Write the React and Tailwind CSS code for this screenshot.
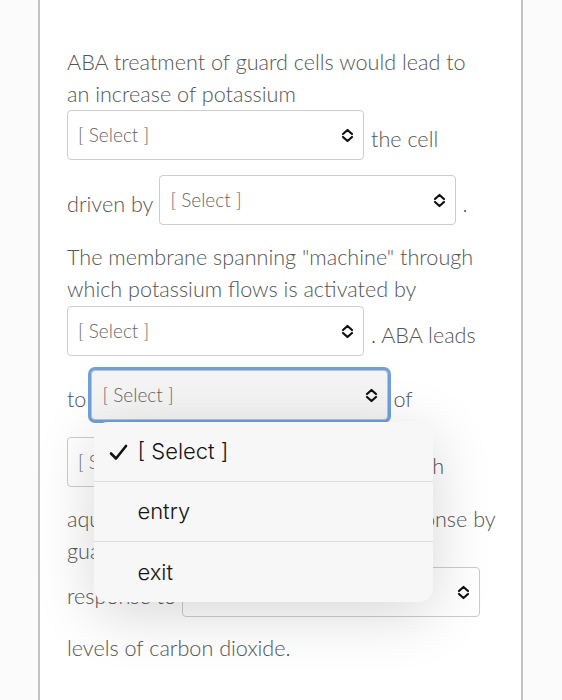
import React from 'react'

function Chevrons() {
  return (
    <svg width="13" height="15" viewBox="0 0 13 15" fill="none" stroke="#111" strokeWidth="2.2" strokeLinecap="round" strokeLinejoin="round">
      <path d="M2 6 L6.5 2 L11 6" />
      <path d="M2 9 L6.5 13 L11 9" />
    </svg>
  )
}

function SelectBox({ width = 'w-[297px]', focused = false }) {
  return (
    <div
      className={`flex h-[50px] shrink-0 items-center justify-between rounded-[4px] border pl-[10px] pr-[9px] ${width} ${
        focused
          ? 'border-[#b9c3cc] bg-[#f4f4f4] shadow-[0_0_0_3px_#6fa0d8]'
          : 'border-[#c9cdd1] bg-white'
      }`}
    >
      <span className="text-[19px] font-light text-[#666]">[ Select ]</span>
      <Chevrons />
    </div>
  )
}

function Dropdown() {
  const items = ['[ Select ]', 'entry', 'exit']
  return (
    <div className="absolute left-[3px] top-[calc(100%+2px)] z-10 w-[339px] overflow-hidden rounded-[14px] bg-[#f7f7f7] shadow-[0_12px_60px_rgba(0,0,0,0.16)] font-['Inter','Liberation_Sans',sans-serif]">
      {items.map((item, i) => (
        <div
          key={item}
          className={`relative flex h-[60px] items-center pl-[43px] text-[22px] text-[#141414] ${
            i < items.length - 1 ? 'border-b border-[#dcdcdc]' : ''
          }`}
        >
          {i === 0 && (
            <svg className="absolute left-[15px] top-[22px]" width="19" height="17" viewBox="0 0 19 17" fill="none" stroke="#111" strokeWidth="2.6" strokeLinecap="round" strokeLinejoin="round">
              <path d="M2 9.5 L7 14.5 L17 2" />
            </svg>
          )}
          {item}
        </div>
      ))}
    </div>
  )
}

export default function App() {
  return (
    <div className="min-h-[700px] bg-[#fbfbfb] font-['Lato','Open_Sans',sans-serif] text-[21.6px] font-light text-[#555]">
      <div className="ml-[38px] min-h-[700px] w-[485px] border-x-2 border-[#c3c3c3] bg-white px-[27px] pt-[46px]">
        <p className="leading-8">
          ABA treatment of guard cells would lead to
          <br />
          an increase of potassium
        </p>

        <div className="flex items-center gap-[7px]">
          <SelectBox />
          <span className="mt-[9px]">the cell</span>
        </div>

        <div className="mt-[15px] flex items-center gap-[6px]">
          <span className="mt-[9px]">driven by</span>
          <SelectBox />
          <span className="mt-[9px]">.</span>
        </div>

        <p className="mt-[16px] leading-8">
          The membrane spanning "machine" through
          <br />
          which potassium flows is activated by
        </p>

        <div className="mt-[1px] flex items-center gap-[7px]">
          <SelectBox />
          <span className="mt-[9px]">. ABA leads</span>
        </div>

        <div className="mt-[14px] flex items-center gap-[5px]">
          <span className="mt-[9px]">to</span>
          <div className="relative">
            <SelectBox focused />
            <Dropdown />
          </div>
          <span className="mt-[9px]">of</span>
        </div>

        <div className="mt-[17px] flex items-center gap-[7px]">
          <SelectBox />
          <span className="mt-[9px]">through</span>
        </div>

        <p className="mt-[16px] whitespace-nowrap leading-8">
          aquaporins, this is also the typical response by
          <br />
          guard cells to water stress.
        </p>

        <div className="flex items-center gap-[6px]">
          <span className="mt-[9px]">response to</span>
          <SelectBox width="w-[298px]" />
        </div>

        <p className="mt-[15px] leading-8">levels of carbon dioxide.</p>
      </div>
    </div>
  )
}
